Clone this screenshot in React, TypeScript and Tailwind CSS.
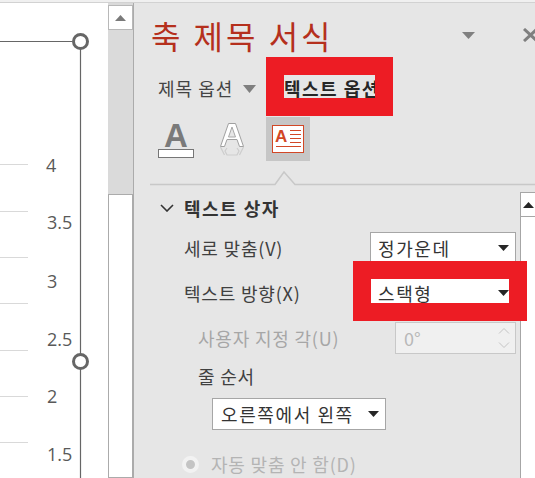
const ko = "font-['Noto_Sans_CJK_KR','Noto_Sans',sans-serif]";

function Caret({ className = '' }: { className?: string }) {
  return (
    <svg width="11" height="6" viewBox="0 0 14 8" preserveAspectRatio="none" className={className}>
      <path d="M0 0h14L7 8z" fill="currentColor" />
    </svg>
  );
}

function Chart() {
  const grid = [164, 211, 257, 303, 350, 396, 442];
  const labels = [
    ['4', 46, 172],
    ['3.5', 47, 229],
    ['3', 47, 288],
    ['2.5', 47, 346],
    ['2', 47, 403],
    ['1.5', 47, 461],
  ] as const;
  return (
    <svg width="108" height="475" viewBox="0 3 108 475" className="shrink-0 bg-white">
      {grid.map((y) => (
        <path key={y} d={`M0 ${y + 0.5}H28`} stroke="#d9d9d9" strokeWidth="1" />
      ))}
      {labels.map(([t, x, y]) => (
        <text key={t} x={x} y={y} fontSize="18" fill="#595959" fontFamily="'Open Sans', sans-serif">
          {t}
        </text>
      ))}
      <path d="M0 41.5H72M80.5 41V478" stroke="#666" strokeWidth="1.2" fill="none" />
      <circle cx="80.5" cy="41.5" r="7" fill="#fff" stroke="#666" strokeWidth="3" />
      <circle cx="80.5" cy="361.5" r="7" fill="#fff" stroke="#666" strokeWidth="3" />
    </svg>
  );
}

function Select({ label, className = '' }: { label: string; className?: string }) {
  return (
    <div className={`flex items-center justify-between bg-white border border-[#a6a6a6] text-[18px] tracking-[1.6px] text-[#333] ${className}`}>
      <span className="whitespace-nowrap">{label}</span>
      <Caret className="text-[#262626]" />
    </div>
  );
}

export default function App() {
  return (
    <div className={`relative w-[535px] h-[478px] overflow-hidden bg-[#e6e6e6] flex flex-col ${ko}`}>
      <div className="h-[3px] shrink-0 bg-[#f0f0f0] border-b border-[#d2d2d2]" />
      <div className="flex flex-1 min-h-0">
        <Chart />

        {/* left scrollbar */}
        <div className="w-[26px] shrink-0 flex flex-col bg-[#dadada] border-r border-[#ababab] pt-[2px]">
          <div className="h-[25px] shrink-0 bg-white border border-[#b8b8b8] flex items-center justify-center">
            <Caret className="rotate-180 text-[#7a7a7a]" />
          </div>
          <div className="h-[164px] shrink-0" />
          <div className="flex-1 bg-white border border-[#ababab]" />
        </div>

        {/* format panel */}
        <div className="flex-1 min-w-0 relative flex flex-col pl-[16px] ml-[1px]">
          <div className="h-[51px] shrink-0 flex items-center pt-[12px]">
            <span className="text-[32px] leading-none tracking-[3px] text-[#b5301d] whitespace-nowrap">축 제목 서식</span>
            <Caret className="absolute left-[327px] top-[29px] text-[#808080] w-[13px] h-[7px]" />
            <svg width="13" height="14" viewBox="0 0 13 14" className="absolute left-[388px] top-[25px] text-[#7f7f7f]">
              <path d="M1 1l13 12M14 1L1 13" stroke="currentColor" strokeWidth="3" />
            </svg>
          </div>

          <div className="h-[42px] mt-[13px] shrink-0 flex items-center pl-[7px]">
            <div className="w-[126px] shrink-0 flex items-center">
              <span className="text-[18px] tracking-[1px] text-[#444] whitespace-nowrap">제목 옵션</span>
              <Caret className="ml-[10px] text-[#7f7f7f] mt-[1px] w-[13px] h-[8px]" />
            </div>
            <span className="w-[91px] overflow-hidden text-[18px] tracking-[1.5px] font-bold text-[#262626] whitespace-nowrap">텍스트 옵션</span>
          </div>

          {/* tab icons */}
          <div className="h-[44px] shrink-0 mt-[8px] flex items-center pl-[7px]">
            <div className="w-[36px] h-[36px] flex flex-col items-center mt-[2px]">
              <span className="font-['Liberation_Sans',sans-serif] font-bold text-[33px] leading-[27px] text-[#7a7a7a]">A</span>
              <div className="w-[36px] h-[9px] bg-white border border-[#767676]" />
            </div>
            <svg width="26" height="34" viewBox="0 0 26 34" className="ml-[25px] shrink-0 mt-[2px]">
              <path d="M9.5 .5h7l8 23h-4l-2.5-7H8l-2.5 7h-4z" fill="#fff" stroke="#a0a0a0" strokeWidth="1" />
              <path d="M13 4l-3.5 10h7z" fill="#e6e6e6" stroke="#a8a8a8" strokeWidth="1" />
              <path d="M1.5 24l4 8M24.5 24l-4 8M8 25l-2 3 2 4h10l2-4-2-3" fill="none" stroke="#cdcdcd" strokeWidth="1.2" />
            </svg>
            <div className="ml-[21px] w-[44px] h-[44px] bg-[#c6c6c6] flex items-center justify-center shrink-0">
              <svg width="32" height="28" viewBox="0 0 32 28">
                <rect x="0.5" y="0.5" width="31" height="27" fill="#fff" stroke="#d24726" />
                <text x="3" y="17" fontSize="17" fontWeight="700" fill="#d24726" fontFamily="'Liberation Sans', sans-serif">A</text>
                <path d="M18 5.5h11M18 9.5h11M18 13.5h11M18 17.5h11M4 21.5h25" stroke="#d24726" strokeWidth="1" />
              </svg>
            </div>
          </div>

          {/* divider with notch */}
          <div className="h-[28px] shrink-0 -ml-[1px] relative">
            <svg width="386" height="28" viewBox="0 0 386 28" className="absolute left-0 top-0">
              <path d="M0 23.5H125L134 11L145 23.5H386" fill="none" stroke="#c8c8c8" strokeWidth="1.5" />
            </svg>
          </div>

          <div className="flex flex-1 min-h-0">
            <div className="flex-1 min-w-0 flex flex-col">
              <div className="h-[28px] mt-[5px] shrink-0 flex items-center pl-[9px]">
                <svg width="14" height="8" viewBox="0 0 14 8" fill="none" stroke="#333" strokeWidth="1.6">
                  <path d="M1 1l6 6 6-6" />
                </svg>
                <span className="ml-[10px] text-[18px] tracking-[1.5px] font-bold text-[#333] whitespace-nowrap">텍스트 상자</span>
              </div>

              <div className="mt-[10px] flex items-center pl-[33px] h-[32px] shrink-0">
                <span className="w-[186px] text-[18px] tracking-[0.8px] text-[#404040] whitespace-nowrap">세로 맞춤(V)</span>
                <Select label="정가운데" className="w-[146px] h-[32px] pl-[7px] pr-[6px]" />
              </div>

              <div className="mt-[13px] flex items-center pl-[33px] h-[32px] shrink-0">
                <span className="w-[186px] text-[18px] tracking-[0.8px] text-[#404040] whitespace-nowrap">텍스트 방향(X)</span>
                <Select label="스택형" className="w-[146px] h-[32px] pl-[7px] pr-[6px]" />
              </div>

              <div className="mt-[13px] flex items-center pl-[47px] h-[32px] shrink-0">
                <span className="w-[197px] text-[18px] tracking-[0.8px] text-[#a6a6a6] whitespace-nowrap">사용자 지정 각(U)</span>
                <div className="w-[121px] h-[32px] bg-[#f0f0f0] border border-[#c8c8c8] flex items-center justify-between pl-[8px] pr-[5px] text-[18px] text-[#b8b8b8]">
                  0°
                  <div className="flex flex-col gap-[8px]">
                    <svg width="12" height="6" viewBox="0 0 12 6" fill="none" stroke="#c4c4c4"><path d="M1 5.5l5-5 5 5" /></svg>
                    <svg width="12" height="6" viewBox="0 0 12 6" fill="none" stroke="#c4c4c4"><path d="M1 .5l5 5 5-5" /></svg>
                  </div>
                </div>
              </div>

              <div className="mt-[6px] pl-[47px] h-[32px] shrink-0 flex items-center text-[18px] tracking-[0.8px] text-[#404040]">줄 순서</div>

              <div className="mt-[6px] pl-[61px] shrink-0">
                <Select label="오른쪽에서 왼쪽" className="w-[174px] h-[32px] pl-[8px] pr-[6px]" />
              </div>

              <div className="mt-[21px] pl-[31px] h-[26px] shrink-0 flex items-center text-[18px] tracking-[0.8px] text-[#b4b4b4]">
                <span className="w-[17px] h-[17px] rounded-full bg-[#c4c4c4] border-[4px] border-[#f2f2f2] shrink-0" />
                <span className="ml-[12px] whitespace-nowrap">자동 맞춤 안 함(D)</span>
              </div>
            </div>

            {/* inner scrollbar */}
            <div className="w-[15px] shrink-0 mt-[3px] bg-white border-l border-[#a6a6a6]">
              <div className="h-[25px] border-t border-b border-[#a6a6a6] flex items-center pl-[2px]">
                <Caret className="rotate-180 text-[#262626]" />
              </div>
            </div>
          </div>
        </div>
      </div>

      {/* red marks drawn over the screenshot */}
      <div className="absolute left-[266px] top-[57px] w-[127px] h-[59px] border-[18px] border-[#ed1c24]" />
      <div className="absolute left-[353px] top-[261px] w-[174px] h-[60px] border-[18px] border-[#ed1c24]" />
    </div>
  );
}
